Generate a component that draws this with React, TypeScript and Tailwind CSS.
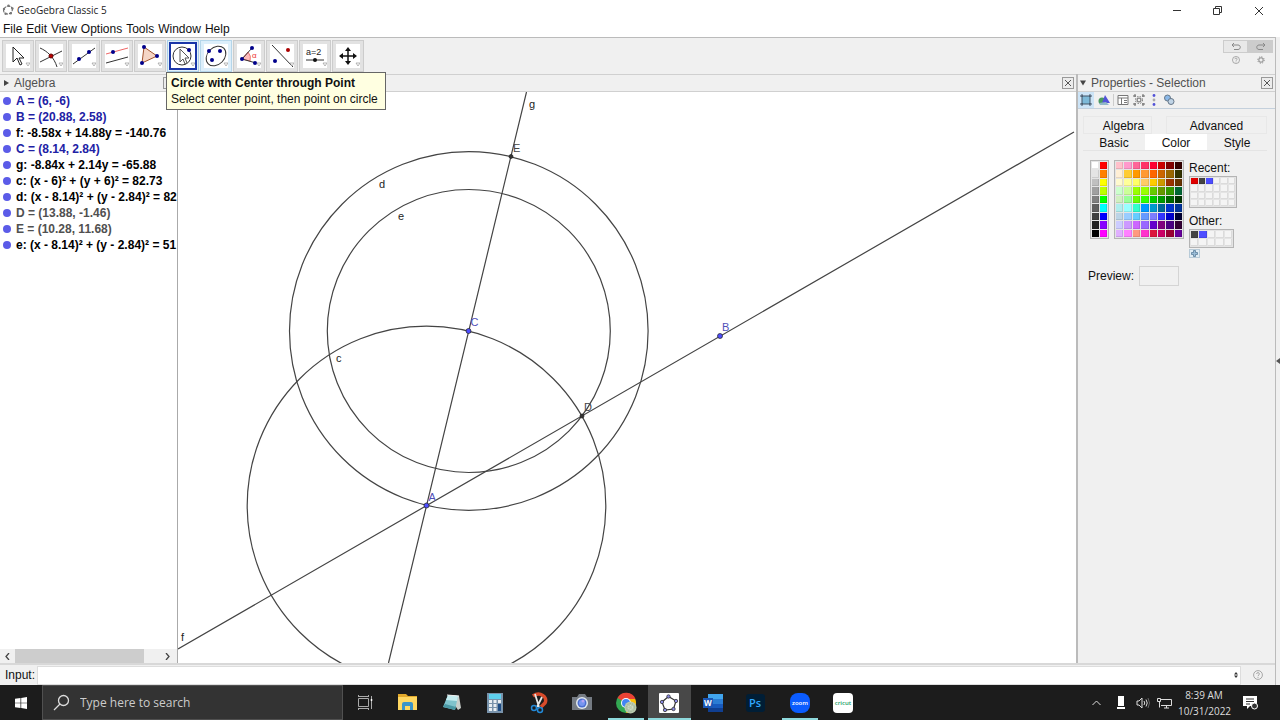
import React from "react";

const toolIcons: { name: string; icon: React.ReactNode }[] = [
  {
    name: "Move",
    icon: (
      <path d="M7 3v15l4-4 3 7 2-1-3-6h5z" fill="#fff" stroke="#222" />
    ),
  },
  {
    name: "Intersect",
    icon: (
      <>
        <path d="M1 4C8 7 15 13 18 23M1 18L23 7" fill="none" stroke="#333" />
        <circle cx="12" cy="12" r="2" fill="#b00" stroke="#600" />
      </>
    ),
  },
  {
    name: "Line",
    icon: (
      <>
        <path d="M1 20L23 4" stroke="#333" />
        <circle cx="7" cy="15" r="2" fill="#00008b" />
        <circle cx="17" cy="8" r="2" fill="#00008b" />
      </>
    ),
  },
  {
    name: "Parallel Line",
    icon: (
      <>
        <path d="M1 10L23 4" stroke="#e66" />
        <path d="M1 19L23 13" stroke="#333" />
        <circle cx="8" cy="8" r="2" fill="#00008b" />
      </>
    ),
  },
  {
    name: "Polygon",
    icon: (
      <>
        <path d="M6 3L19 12L4 19z" fill="#f5d5c5" stroke="#a0522d" />
        <circle cx="6" cy="3" r="2" fill="#00008b" />
        <circle cx="19" cy="12" r="2" fill="#00008b" />
        <circle cx="4" cy="19" r="2" fill="#00008b" />
      </>
    ),
  },
  {
    name: "Circle with Center through Point",
    icon: (
      <>
        <circle cx="11" cy="12" r="9" fill="none" stroke="#333" />
        <circle cx="18" cy="6" r="2" fill="#00008b" />
        <path d="M9 5v13l3-3 2 5 2-1-2-5h4z" fill="#fff" stroke="#555" />
      </>
    ),
  },
  {
    name: "Ellipse",
    icon: (
      <>
        <ellipse
          cx="12"
          cy="12"
          rx="11"
          ry="8.5"
          transform="rotate(-45 12 12)"
          fill="none"
          stroke="#333"
        />
        <circle cx="5" cy="7" r="2" fill="#00008b" />
        <circle cx="16" cy="7" r="2" fill="#00008b" />
        <circle cx="8" cy="16" r="2" fill="#00008b" />
      </>
    ),
  },
  {
    name: "Angle",
    icon: (
      <>
        <path d="M5 15l6-7a9 9 0 0 1 2 9z" fill="#fbb" stroke="#e77" />
        <path d="M15 4L5 15L19 19" fill="none" stroke="#333" />
        <circle cx="15" cy="4" r="2" fill="#00008b" />
        <circle cx="5" cy="15" r="2" fill="#00008b" />
        <circle cx="18" cy="19" r="2" fill="#00008b" />
        <text x="15" y="14" fontSize="8" fill="#e33">
          α
        </text>
      </>
    ),
  },
  {
    name: "Reflect about Line",
    icon: (
      <>
        <path d="M2 1L23 23" stroke="#333" />
        <circle cx="18" cy="6" r="2" fill="#a00" />
        <circle cx="5" cy="17" r="2" fill="#00008b" />
      </>
    ),
  },
  {
    name: "Slider",
    icon: (
      <>
        <text x="3" y="11" fontSize="9" fill="#222">
          a=2
        </text>
        <path d="M3 16H21" stroke="#333" />
        <circle cx="12" cy="16" r="2" fill="#111" />
      </>
    ),
  },
  {
    name: "Move Graphics View",
    icon: (
      <>
        <path d="M12 6v12M6 12h12" stroke="#111" strokeWidth="1.5" />
        <path
          d="M12 3l3 4H9zM12 21l3-4H9zM3 12l4-3v6zM21 12l-4-3v6z"
          fill="#111"
        />
      </>
    ),
  },
];

const algebraItems = [
  { text: "A = (6, -6)", color: "text-[#2121a5]" },
  { text: "B = (20.88, 2.58)", color: "text-[#2121a5]" },
  { text: "f: -8.58x + 14.88y = -140.76", color: "text-black" },
  { text: "C = (8.14, 2.84)", color: "text-[#2121a5]" },
  { text: "g: -8.84x + 2.14y = -65.88", color: "text-black" },
  { text: "c: (x - 6)² + (y + 6)² = 82.73", color: "text-black" },
  { text: "d: (x - 8.14)² + (y - 2.84)² = 82", color: "text-black" },
  { text: "D = (13.88, -1.46)", color: "text-[#505050]" },
  { text: "E = (10.28, 11.68)", color: "text-[#505050]" },
  { text: "e: (x - 8.14)² + (y - 2.84)² = 51", color: "text-black" },
];

const basicColors = [
  "#fff", "#f00", "#e4e4e4", "#ff8000", "#c0c0c0", "#ff0", "#a0a0a0", "#bf0",
  "#808080", "#0f0", "#606060", "#0ff", "#404040", "#00f", "#202020", "#80f",
  "#000", "#f0f",
];

const mainColors = [
  "#ffc0cb", "#ff99cc", "#ff6699", "#ff3366", "#ff0033", "#cc0000", "#800000", "#330000",
  "#ffefd5", "#ffcc33", "#ff9900", "#ff9933", "#ff6600", "#cc6600", "#996600", "#333300",
  "#ffface", "#ffff99", "#ffff66", "#ffcc66", "#ffcc00", "#cc9900", "#993300", "#663300",
  "#ccffcc", "#ccff99", "#99ff00", "#99ff00", "#66cc00", "#669900", "#339900", "#006633",
  "#d0f0c0", "#99ff99", "#66ff00", "#33ff00", "#00cc00", "#009900", "#006600", "#003300",
  "#afeeee", "#99ffff", "#33ffcc", "#0099ff", "#0099cc", "#006699", "#0033cc", "#003399",
  "#bcd4e6", "#99ccff", "#66ccff", "#6699ff", "#7d7dff", "#3333ff", "#0000cc", "#000033",
  "#ccccff", "#cc99ff", "#cc66ff", "#9966ff", "#6600cc", "#800080", "#4b0082", "#330033",
  "#e0b0ff", "#ff80ff", "#ff9980", "#ff33cc", "#dc143c", "#cc0066", "#990033", "#660099",
];

const recentColors = ["#e00000", "#444", "#4d4dff", ...Array(21).fill("#f4f4f4")];
const otherColors = ["#444", "#4d4dff", ...Array(8).fill("#f4f4f4")];

const plotPoints = [
  { name: "A", x: 426.5, y: 505.5, free: true },
  { name: "B", x: 720, y: 336, free: true },
  { name: "C", x: 468.5, y: 331, free: true },
  { name: "D", x: 582, y: 416, free: false },
  { name: "E", x: 511, y: 156.5, free: false },
];

const plotLabels = [
  { name: "g", x: 529, y: 108 },
  { name: "d", x: 379, y: 188 },
  { name: "e", x: 398, y: 220 },
  { name: "c", x: 336, y: 362 },
  { name: "f", x: 181, y: 641 },
];

const CloseBox: React.FC = () => (
  <button
    aria-label="Close view"
    className="flex size-3 items-center justify-center border border-[#999] bg-[#ececec]"
  >
    <svg className="size-2" viewBox="0 0 8 8" stroke="#555">
      <path d="M1 1l6 6M7 1L1 7" />
    </svg>
  </button>
);

interface SwatchesProps {
  colors: string[];
  className: string;
}

const Swatches: React.FC<SwatchesProps> = ({ colors, className }) => (
  <div className={`grid gap-px border border-[#b4b4b4] bg-[#e4e4e4] p-px ${className}`}>
    {colors.map((color, i) => (
      <button
        key={i}
        aria-label={color}
        className="border-r border-b border-black/10"
        style={{ backgroundColor: color }}
      />
    ))}
  </div>
);

const HelpIcon: React.FC<{ className: string }> = ({ className }) => (
  <svg className={className} viewBox="0 0 12 12" fill="none" stroke="currentColor">
    <circle cx="6" cy="6" r="5.3" />
    <path d="M4.3 4.8c0-2.3 3.4-2.3 3.4 0 0 1.2-1.7 1.2-1.7 2.5M6 8.3v1.2" />
  </svg>
);

const TitleBar: React.FC = () => (
  <header className="flex h-5 shrink-0 items-center bg-white">
    <svg className="ml-[2px] size-3" viewBox="0 0 12 12" fill="none" stroke="#555">
      <ellipse cx="6" cy="6" rx="4.5" ry="3.8" transform="rotate(-25 6 6)" strokeDasharray="3 1" />
      <g fill="#777" stroke="none">
        <circle cx="2" cy="5" r="1.2" />
        <circle cx="6.5" cy="1.8" r="1.2" />
        <circle cx="10.4" cy="4.5" r="1.2" />
        <circle cx="8.8" cy="9.3" r="1.2" />
        <circle cx="3.6" cy="9.8" r="1.2" />
      </g>
    </svg>
    <h1 className="ml-[3px] flex-1 font-['Open_Sans','Noto_Sans',sans-serif] text-[10px] text-[#222]">
      GeoGebra Classic 5
    </h1>
    <div className="mr-4 flex items-center gap-[30px] text-[#333]">
      <button aria-label="Minimize">
        <svg className="size-[11px]" viewBox="0 0 11 11" stroke="currentColor">
          <path d="M2 5.5h8" />
        </svg>
      </button>
      <button aria-label="Restore">
        <svg className="size-[11px]" viewBox="0 0 11 11" fill="none" stroke="currentColor">
          <path d="M1.5 3.5h6v6h-6zM3.5 3V1.500h6v6H8" />
        </svg>
      </button>
      <button aria-label="Close">
        <svg className="size-[11px]" viewBox="0 0 11 11" stroke="currentColor">
          <path d="M2 2l8 8M10 2l-8 8" />
        </svg>
      </button>
    </div>
  </header>
);

const MenuBar: React.FC = () => (
  <nav className="flex h-[17px] shrink-0 items-center gap-1 bg-white pl-[3px] text-[12px] text-[#111]">
    {["File", "Edit", "View", "Options", "Tools", "Window", "Help"].map((item) => (
      <button key={item}>{item}</button>
    ))}
  </nav>
);

const toolStyle = (index: number): string => {
  if (index === 5) return "border-[#a9cfe8] bg-[#e3f1fa]";
  if (index === 6) return "border-[#b5d6ea] bg-[#dceefa]";
  return "border-[#ccc] bg-[#e2e2e2]";
};

const Toolbar: React.FC = () => (
  <div className="relative flex h-[37px] shrink-0 border-t border-[#bbb] bg-[#f0f0f0] pt-[2px] pl-[2px]">
    <div className="flex gap-px">
      {toolIcons.map(({ name, icon }, i) => (
        <button
          key={name}
          aria-label={name}
          className={`flex size-8 items-center justify-center border ${toolStyle(i)}`}
        >
          <span
            className={
              i === 5
                ? "block border-2 border-[#1b36a8] bg-white"
                : "block bg-white"
            }
          >
            <svg className="size-6" viewBox="0 0 24 24">
              {icon}
              <path d="M20 19h4l-2 3z" fill="#fff" stroke="#999" strokeWidth=".7" />
            </svg>
          </span>
        </button>
      ))}
    </div>
    <div className="mr-[2px] ml-auto grid h-[26px] w-[50px] grid-cols-2 grid-rows-2 text-[#888]">
      <button
        aria-label="Undo"
        className="flex items-center justify-center border border-[#ccc] bg-[#e8e8e8]"
      >
        <svg className="h-2 w-[10px]" viewBox="0 0 10 8" fill="none" stroke="currentColor">
          <path d="M1 2h6c3 0 3 4.5 0 4.5H3M3 0L1 2l2 2" />
        </svg>
      </button>
      <button aria-label="Redo" className="flex items-center justify-center bg-[#ccc]">
        <svg className="h-2 w-[10px]" viewBox="0 0 10 8" fill="none" stroke="currentColor">
          <path d="M9 2H3c-3 0-3 4.5 0 4.5h4M7 0l2 2-2 2" />
        </svg>
      </button>
      <button aria-label="Help" className="flex items-center justify-center">
        <HelpIcon className="size-2" />
      </button>
      <button aria-label="Settings" className="flex items-center justify-center">
        <svg className="size-2" viewBox="0 0 8 8" fill="none" stroke="currentColor">
          <circle cx="4" cy="4" r="2.2" />
          <circle cx="4" cy="4" r="3.2" strokeDasharray="1.25 1.25" />
        </svg>
      </button>
    </div>
    <div
      role="tooltip"
      className="absolute top-[34px] left-[166px] z-10 w-[220px] border border-[#666] bg-[#ffffe1] px-1 py-[2px] text-[12px] leading-4 whitespace-nowrap text-[#111]"
    >
      <p className="font-bold">Circle with Center through Point</p>
      <p>Select center point, then point on circle</p>
    </div>
  </div>
);

const AlgebraPanel: React.FC = () => (
  <section className="flex w-[178px] shrink-0 flex-col border-r border-[#aaa] bg-white">
    <div className="flex h-[18px] shrink-0 items-center border-y border-[#d0d0d0] bg-[#f0f0f0] pr-[2px] pl-1 text-[#505050]">
      <svg className="size-[6px]" viewBox="0 0 6 6" fill="#444">
        <path d="M0 0l5 3-5 3z" />
      </svg>
      <h2 className="ml-1 flex-1 text-[12px]">Algebra</h2>
      <CloseBox />
    </div>
    <ul className="flex-1 pt-px text-[12px] leading-4 font-bold">
      {algebraItems.map(({ text, color }) => (
        <li key={text} className={`flex items-center gap-[5px] pl-[3px] whitespace-nowrap ${color}`}>
          <span className="size-2 shrink-0 rounded-full bg-[#5b5be8]" />
          <span>{text}</span>
        </li>
      ))}
    </ul>
    <div className="flex h-[14px] shrink-0 items-center bg-[#f0f0f0] text-[#444]">
      <button aria-label="Scroll left" className="flex w-[15px] justify-center">
        <svg className="size-[7px]" viewBox="0 0 7 7" fill="none" stroke="currentColor" strokeWidth="1.3">
          <path d="M5 0L2 3.5 5 7" />
        </svg>
      </button>
      <div className="h-full flex-1 pr-[14px]">
        <div className="h-full bg-[#cdcdcd]" />
      </div>
      <button aria-label="Scroll right" className="flex w-[19px] justify-center">
        <svg className="size-[7px]" viewBox="0 0 7 7" fill="none" stroke="currentColor" strokeWidth="1.3">
          <path d="M2 0l3 3.5L2 7" />
        </svg>
      </button>
    </div>
  </section>
);

const GraphicsView: React.FC = () => (
  <section className="flex min-w-0 flex-1 flex-col bg-white">
    <div className="flex h-[18px] shrink-0 items-center justify-end border-y border-[#d0d0d0] bg-[#f0f0f0] pr-[2px]">
      <CloseBox />
    </div>
    <div className="min-h-0 flex-1">
      <svg
        className="block h-full w-full"
        viewBox="178 92 898 571"
        preserveAspectRatio="xMinYMin slice"
      >
        <g fill="none" stroke="#444" strokeWidth="1.2">
          <circle cx="426.5" cy="505.5" r="179.3" />
          <circle cx="468.8" cy="331" r="179.3" />
          <circle cx="468.8" cy="331" r="141.5" />
          <path d="M178 649L1074 132M388.5 663L526.5 92" />
        </g>
        <g fontSize="11">
          {plotPoints.map(({ name, x, y, free }) => (
            <g key={name}>
              <circle
                cx={x}
                cy={y}
                r={free ? 2.5 : 2}
                fill={free ? "#4d4dff" : "#333"}
                stroke="#222"
                strokeWidth=".7"
              />
              <text x={x + 2} y={y - 5} fill={free ? "#5050b8" : "#444"}>
                {name}
              </text>
            </g>
          ))}
          {plotLabels.map(({ name, x, y }) => (
            <text key={name} x={x} y={y} fill="#222">
              {name}
            </text>
          ))}
        </g>
      </svg>
    </div>
  </section>
);

const PropertyIcons: React.FC = () => (
  <div className="flex h-[17px] shrink-0 items-center border-b border-[#c4d0dc]">
    <button aria-label="Objects" className="flex size-4 items-center justify-center bg-[#cce4f7]">
      <svg className="size-3" viewBox="0 0 12 12" fill="none" stroke="#456">
        <path d="M2 2h8v8H2z" fill="#7db9d8" />
        <path d="M0 2h3M2 0v3M9 2h3M10 0v3M0 10h3M2 9v3M9 10h3M10 9v3" />
      </svg>
    </button>
    <button aria-label="Graphics" className="ml-1 border-r border-[#ccc] pr-[3px]">
      <svg className="size-3" viewBox="0 0 12 12">
        <circle cx="4" cy="7" r="3.5" fill="#4a9a60" />
        <path d="M7 1l5 8H4z" fill="#5252d8" />
        <path d="M1 9l7-1 3 3H2z" fill="#90b8c8" />
      </svg>
    </button>
    <button aria-label="Layout" className="ml-[3px]">
      <svg className="size-3" viewBox="0 0 12 12" fill="#fff" stroke="#777">
        <path d="M1 1.500h10v9H1zM1 4h10M4.500 4v6.500M7 6.500h3M7 8.500h3" />
      </svg>
    </button>
    <button aria-label="Defaults" className="ml-1">
      <svg className="size-3" viewBox="0 0 12 12" fill="none" stroke="#666">
        <path d="M0 2h3M2 0v3M9 2h3M10 0v3M0 10h3M2 9v3M9 10h3M10 9v3" />
        <circle cx="6" cy="6" r="2" />
        <circle cx="6" cy="6" r="3.5" strokeDasharray="1.4 1.4" />
      </svg>
    </button>
    <button aria-label="Steps" className="ml-[3px]">
      <svg className="size-3" viewBox="0 0 12 12" fill="#5252d8">
        <circle cx="6" cy="1.5" r="1.4" />
        <circle cx="6" cy="6" r="1.4" fill="#aaa" />
        <circle cx="6" cy="10.5" r="1.4" />
      </svg>
    </button>
    <button aria-label="Advanced" className="ml-[3px]">
      <svg className="size-3" viewBox="0 0 12 12" stroke="#678">
        <circle cx="4.5" cy="4" r="3" fill="#8ab8e8" />
        <circle cx="8" cy="7.5" r="3" fill="#c0d4e6" />
      </svg>
    </button>
  </div>
);

const PropertiesPanel: React.FC = () => (
  <section className="flex w-[199px] shrink-0 flex-col border-l-2 border-[#bbb] bg-[#f0f0f0]">
    <div className="flex h-[18px] shrink-0 items-center border-y border-[#d0d0d0] px-[2px]">
      <svg className="size-[6px]" viewBox="0 0 6 5" fill="#444">
        <path d="M0 0h6L3 5z" />
      </svg>
      <h2 className="ml-[5px] flex-1 text-[12px] text-[#505050]">Properties - Selection</h2>
      <CloseBox />
    </div>
    <PropertyIcons />
    <div className="mt-[7px] mr-2 ml-[5px] text-[12px] text-[#111]">
      <div role="tablist">
        <div className="flex h-[18px] gap-[14px]">
          <button role="tab" className="w-[69px] border border-[#e8e8e8] pl-3">
            Algebra
          </button>
          <button role="tab" className="flex-1 border border-[#e8e8e8]">
            Advanced
          </button>
        </div>
        <div className="flex h-[17px] border-b border-[#e4e4e4]">
          <button role="tab" className="w-[62px]">Basic</button>
          <button role="tab" aria-selected="true" className="w-[62px] bg-white">
            Color
          </button>
          <button role="tab" className="flex-1">Style</button>
        </div>
      </div>
      <div className="mt-[9px] ml-[7px] flex items-start gap-[5px]">
        <Swatches colors={basicColors} className="h-[79px] w-[19px] grid-cols-2" />
        <Swatches colors={mainColors} className="h-[79px] w-[70px] grid-cols-8" />
        <div className="leading-4">
          <h3>Recent:</h3>
          <Swatches colors={recentColors} className="h-8 w-12 grid-cols-6" />
          <h3 className="mt-[5px]">Other:</h3>
          <Swatches colors={otherColors} className="h-[19px] w-[45px] grid-cols-5" />
          <button
            aria-label="Add color"
            className="mt-px flex h-[9px] w-[11px] items-center justify-center border border-[#b8cbd8] bg-[#e0ecf4]"
          >
            <svg className="size-[7px]" viewBox="0 0 7 7" fill="#9bbdd8" stroke="#4d7390" strokeWidth=".7">
              <path d="M2.5.5h2v2h2v2h-2v2h-2v-2h-2v-2h2z" />
            </svg>
          </button>
        </div>
      </div>
      <div className="mt-2 ml-[5px] flex items-center gap-[5px]">
        <span>Preview:</span>
        <span className="h-5 w-10 border border-[#d4d4d4]" />
      </div>
    </div>
  </section>
);

const InputBar: React.FC = () => (
  <div className="flex h-[22px] shrink-0 items-center border-t-2 border-[#d8d8d8] bg-[#f0f0f0]">
    <label htmlFor="algebra-input" className="w-[37px] pl-[5px] text-[12px] text-[#111]">
      Input:
    </label>
    <div className="flex h-[19px] flex-1 items-center border border-[#ddd] bg-white">
      <input id="algebra-input" type="text" className="h-full flex-1 outline-none" />
      <svg className="mr-[2px] h-[6px] w-1" viewBox="0 0 4 6" fill="#333">
        <path d="M0 2.5L2 0l2 2.5zM0 3.5h4L2 6z" />
      </svg>
    </div>
    <button aria-label="Input help" className="flex w-[34px] justify-center text-[#999]">
      <HelpIcon className="size-[10px]" />
    </button>
  </div>
);

const taskbarApps: { name: string; icon: React.ReactNode; state?: string }[] = [
  {
    name: "Task View",
    icon: (
      <g fill="none" stroke="#aaa">
        <path d="M4.5 6.500h10v8h-10zM4.500 3v2M14.500 3v2M4.500 16v2M14.500 16v2M4 4.500h11M4 16.500h11M17.500 4v13" />
        <path d="M17.500 7v2" stroke="#fff" strokeWidth="1.5" />
      </g>
    ),
  },
  {
    name: "File Explorer",
    icon: (
      <>
        <path d="M1 2h8l2 2h9v14H1z" fill="#e2a92b" />
        <path d="M1 5h19v13H1z" fill="#ffd761" />
        <path d="M5 18v-6q0-2 2-2h7q2 0 2 2v6h-3v-4H8v4z" fill="#3b94c8" />
      </>
    ),
  },
  {
    name: "Notes",
    icon: (
      <>
        <path d="M7 3l11 1 2 12-3 2z" fill="#c9cfcb" />
        <path d="M7 3l10 1-3 14-12-3z" fill="#7fc3cc" />
        <path d="M7 3l10 1-1 5-11-1z" fill="#c4ecef" />
        <path d="M2 15l12 3 1-3-11-3z" fill="#4a98a4" />
        <path d="M6 3l12 1" stroke="#eee" />
      </>
    ),
  },
  {
    name: "Calculator",
    icon: (
      <>
        <path d="M3 1h16v20H3z" fill="#7993ab" />
        <path d="M5 2h12v5H5z" fill="#5ed0ee" />
        <path
          d="M5 8h3v3H5zM9.500 8h3v3h-3zM14 8h3v3h-3zM5 12h3v3H5zM9.500 12h3v3h-3zM5 16h3v3H5zM9.500 16h3v3h-3z"
          fill="#e8eef2"
        />
        <path d="M14 12h3v7h-3z" fill="#1c4b83" />
      </>
    ),
  },
  {
    name: "Snipping Tool",
    icon: (
      <>
        <path d="M5 4c7-5 15 1 12 7l-4 4" fill="none" stroke="#d94b2b" strokeWidth="3.5" />
        <path d="M7 2l4 13M14 5L9 15" stroke="#e6e6e6" strokeWidth="1.8" />
        <circle cx="6" cy="16" r="2.5" fill="none" stroke="#2389d7" strokeWidth="1.5" />
        <circle cx="12" cy="18" r="2.500" fill="none" stroke="#2389d7" strokeWidth="1.5" />
      </>
    ),
  },
  {
    name: "Camera",
    icon: (
      <>
        <path d="M1 5h5l2-3h6l2 3h5v13H1z" fill="#757b83" />
        <circle cx="11" cy="11" r="6" fill="#e2e9ef" />
        <circle cx="11" cy="11" r="4.5" fill="#4c6fd0" />
        <circle cx="11" cy="11" r="3" fill="#7796f0" />
        <circle cx="12" cy="9" r="1.5" fill="#b6a4f4" />
      </>
    ),
  },
  {
    name: "Chrome",
    state: "open",
    icon: (
      <>
        <circle cx="11" cy="11" r="10" fill="#33a852" />
        <path d="M11 11L2.500 6A10 10 0 0 1 20.500 7z" fill="#e94235" />
        <path d="M11 7h9.200A10 10 0 0 1 11 21l4-9z" fill="#fbbc05" />
        <circle cx="11" cy="11" r="5" fill="#fff" />
        <circle cx="11" cy="11" r="4" fill="#4285f4" />
        <circle cx="15.5" cy="15.5" r="6" fill="#b9c9ae" />
        <circle cx="15.5" cy="15.5" r="4" fill="none" stroke="#94a98b" strokeDasharray="1 1.5" />
        <circle cx="15.5" cy="15.5" r="2" fill="none" stroke="#e1e7d9" strokeDasharray="1 1" />
      </>
    ),
  },
  {
    name: "GeoGebra",
    state: "active",
    icon: (
      <>
        <rect x="1" y="1" width="20" height="20" rx="1" fill="#fff" />
        <path d="M10.5 4.5L18 9l-2.500 8L7 18 4 10z" fill="none" stroke="#333" strokeWidth="1.2" />
        <g fill="#8888e0" stroke="#333" strokeWidth=".8">
          <circle cx="10.5" cy="4.5" r="1.7" />
          <circle cx="18" cy="9" r="1.7" />
          <circle cx="15.5" cy="17" r="1.7" />
          <circle cx="7" cy="18" r="1.7" />
          <circle cx="4" cy="10" r="1.7" />
        </g>
      </>
    ),
  },
  {
    name: "Word",
    icon: (
      <>
        <path d="M6 2h15v5H6z" fill="#41a5ee" />
        <path d="M6 7h15v5H6z" fill="#2b7cd3" />
        <path d="M6 12h15v4H6z" fill="#185abd" />
        <path d="M6 16h15v4H6z" fill="#103f91" />
        <path d="M1 6h10v10H1z" fill="#1b57b5" />
        <text x="2" y="14" fontSize="8" fontWeight="bold" fill="#fff">
          W
        </text>
      </>
    ),
  },
  {
    name: "Photoshop",
    icon: (
      <>
        <rect x="1" y="2" width="19" height="18" rx="3" fill="#001e36" />
        <text x="4" y="15" fontSize="11" fontWeight="600" fill="#31a8ff">
          Ps
        </text>
      </>
    ),
  },
  {
    name: "Zoom",
    state: "open",
    icon: (
      <>
        <rect x="1" y="1" width="20" height="20" rx="8" fill="#0b5cff" />
        <text x="11" y="13" fontSize="6" fontWeight="600" textAnchor="middle" fill="#fff">
          zoom
        </text>
      </>
    ),
  },
  {
    name: "Cricut",
    icon: (
      <>
        <rect x="1" y="1" width="20" height="20" rx="4" fill="#fff" />
        <text x="11" y="13" fontSize="6" fontWeight="600" textAnchor="middle" fill="#16a068">
          cricut
        </text>
      </>
    ),
  },
];

const Taskbar: React.FC = () => (
  <footer className="flex h-[35px] shrink-0 bg-[#1c1c1c] font-['Open_Sans','Noto_Sans',sans-serif] text-white">
    <button aria-label="Start" className="flex w-[42px] items-center justify-center">
      <svg className="size-3" viewBox="0 0 12 12" fill="#fff">
        <path d="M0 1.700L5.500 1v4.700H0zM6.200.9L12 0v5.700H6.200zM0 6.300h5.500V11L0 10.300zM6.200 6.300H12V12l-5.800-.9z" />
      </svg>
    </button>
    <label className="flex w-[301px] items-center border border-[#505050] bg-[#333] pl-[10px]">
      <svg className="size-[18px]" viewBox="0 0 18 18" fill="none" stroke="#ddd" strokeWidth="1.3">
        <circle cx="10.5" cy="6.500" r="5" />
        <path d="M7 10l-6 6" />
      </svg>
      <input
        type="text"
        aria-label="Search"
        placeholder="Type here to search"
        className="ml-[9px] min-w-0 flex-1 text-[12px] outline-none placeholder:text-[#ccc]"
      />
    </label>
    <div className="grid w-[522px] grid-cols-12">
      {taskbarApps.map(({ name, icon, state }) => (
        <button
          key={name}
          aria-label={name}
          className={`relative flex items-center justify-center ${
            state === "active" ? "bg-[#484848]" : ""
          }`}
        >
          <svg className="size-[22px]" viewBox="0 0 22 22">
            {icon}
          </svg>
          {state && (
            <span
              className={`absolute bottom-0 h-[2px] bg-[#8ed9dc] ${
                state === "active" ? "inset-x-0" : "inset-x-1"
              }`}
            />
          )}
        </button>
      ))}
    </div>
    <div className="mr-[22px] ml-auto flex items-center text-[#ddd]">
      <svg className="h-[6px] w-[9px]" viewBox="0 0 9 6" fill="none" stroke="currentColor">
        <path d="M.5 5l4-4 4 4" />
      </svg>
      <svg className="ml-4 h-[14px] w-2" viewBox="0 0 8 14" fill="#fff">
        <path d="M1 0h6v10H1zM0 11h8v2H0z" />
      </svg>
      <svg className="ml-[11px] h-3 w-[14px]" viewBox="0 0 14 12" fill="none" stroke="currentColor">
        <path d="M1 4h2l3-3v10L3 8H1z" />
        <path d="M8 4q1.500 2 0 4M10 2.500q2.500 3.500 0 7" />
        <path d="M12 1q3 5 0 10" stroke="#666" />
      </svg>
      <svg className="ml-[7px] h-3 w-[15px]" viewBox="0 0 15 12" fill="none" stroke="currentColor">
        <path d="M4 2.500h10.500v6H4M2.500 5v5.500M7 11h5M9.500 8.500V11M.5 1.500h3v3h-3z" />
      </svg>
      <div className="ml-[6px] w-[52px] text-center text-[10px] leading-4">
        <p>8:39 AM</p>
        <p>10/31/2022</p>
      </div>
      <svg className="ml-[13px] size-[15px]" viewBox="0 0 15 15">
        <path d="M0 1h14v10H7l-3 3v-3H0z" fill="#fff" />
        <path d="M3 4h8M3 6.500h8M3 9h4" stroke="#333" />
        <circle cx="11.5" cy="11" r="3" fill="#333" stroke="#fff" />
      </svg>
    </div>
  </footer>
);

const App: React.FC = () => (
  <div className="flex h-screen flex-col overflow-hidden bg-white font-['Liberation_Sans',Arial,sans-serif]">
    <TitleBar />
    <MenuBar />
    <div className="flex min-h-0 flex-1">
      <div className="flex min-w-0 flex-1 flex-col">
        <Toolbar />
        <main className="flex min-h-0 flex-1">
          <AlgebraPanel />
          <GraphicsView />
          <PropertiesPanel />
        </main>
        <InputBar />
      </div>
      <aside className="flex w-[5px] items-center border-l border-[#bbb] bg-[#f0f0f0]">
        <svg className="h-[6px] w-1" viewBox="0 0 4 6" fill="#555">
          <path d="M4 0v6L0 3z" />
        </svg>
      </aside>
    </div>
    <Taskbar />
  </div>
);

export default App;
